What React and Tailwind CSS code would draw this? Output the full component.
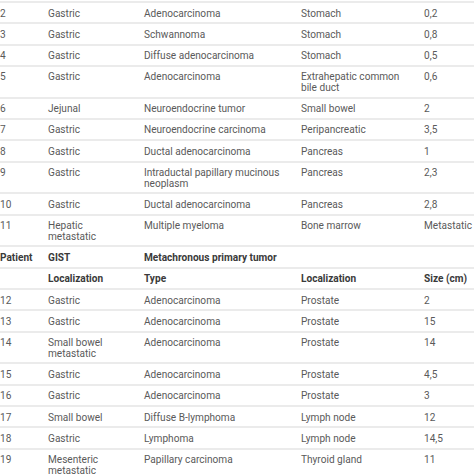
import React from "react";

const rowsTop = [
  ["2", "Gastric", "Adenocarcinoma", "Stomach", "0,2"],
  ["3", "Gastric", "Schwannoma", "Stomach", "0,8"],
  ["4", "Gastric", "Diffuse adenocarcinoma", "Stomach", "0,5"],
  ["5", "Gastric", "Adenocarcinoma", "Extrahepatic common bile duct", "0,6"],
  ["6", "Jejunal", "Neuroendocrine tumor", "Small bowel", "2"],
  ["7", "Gastric", "Neuroendocrine carcinoma", "Peripancreatic", "3,5"],
  ["8", "Gastric", "Ductal adenocarcinoma", "Pancreas", "1"],
  ["9", "Gastric", "Intraductal papillary mucinous neoplasm", "Pancreas", "2,3"],
  ["10", "Gastric", "Ductal adenocarcinoma", "Pancreas", "2,8"],
  ["11", "Hepatic metastatic", "Multiple myeloma", "Bone marrow", "Metastatic"],
];

const rowsBottom = [
  ["12", "Gastric", "Adenocarcinoma", "Prostate", "2"],
  ["13", "Gastric", "Adenocarcinoma", "Prostate", "15"],
  ["14", "Small bowel metastatic", "Adenocarcinoma", "Prostate", "14"],
  ["15", "Gastric", "Adenocarcinoma", "Prostate", "4,5"],
  ["16", "Gastric", "Adenocarcinoma", "Prostate", "3"],
  ["17", "Small bowel", "Diffuse B-lymphoma", "Lymph node", "12"],
  ["18", "Gastric", "Lymphoma", "Lymph node", "14,5"],
  ["19", "Mesenteric metastatic", "Papillary carcinoma", "Thyroid gland", "11"],
];

const rowCls =
  "grid grid-cols-[48px_96px_157px_123px_80px] border-t-2 border-[#ebebeb]";
const cellCls = "pt-[5.5px] pb-[3.3px] pr-[14px] leading-[10.5px]";

function Row({ cells, bold }) {
  return (
    <div className={rowCls}>
      {cells.map((c, i) => (
        <div
          key={i}
          className={`${cellCls} ${bold ? "font-bold text-[#3a3a3a]" : ""} ${
            i === 4 ? "whitespace-nowrap" : ""
          }`}
        >
          {c}
        </div>
      ))}
    </div>
  );
}

export default function App() {
  return (
    <div
      className="w-[474px] h-[474px] overflow-hidden bg-white text-[10.1px] text-[#5a5a5a]"
      style={{ fontFamily: "Roboto, 'Noto Sans', sans-serif" }}
    >
      <div className="w-[504px] pt-[1px]">
        {rowsTop.map((r) => (
          <Row key={r[0]} cells={r} />
        ))}
        <div className={`${rowCls} font-bold text-[#3a3a3a]`}>
          <div className={cellCls}>Patient</div>
          <div className={cellCls}>GIST</div>
          <div className={`${cellCls} col-span-3`}>Metachronous primary tumor</div>
        </div>
        <Row cells={["", "Localization", "Type", "Localization", "Size (cm)"]} bold />
        {rowsBottom.map((r) => (
          <Row key={r[0]} cells={r} />
        ))}
      </div>
    </div>
  );
}
